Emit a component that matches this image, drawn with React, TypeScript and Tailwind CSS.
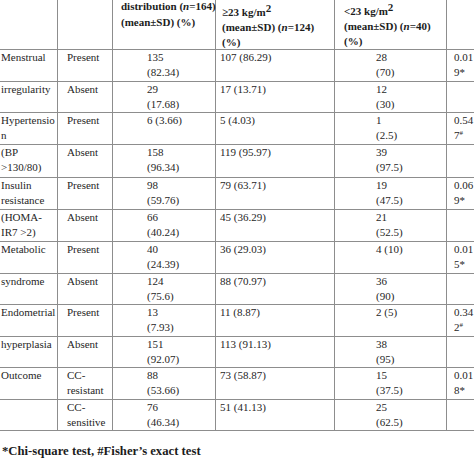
type Row = {
  label: string[]
  group: string[]
  total: string[]
  high: string
  low: string[]
  p?: [string, string]
  fisher?: boolean
  h: string
}

const rows: Row[] = [
  { h: 'h-[32px]', label: ['Menstrual'], group: ['Present'], total: ['135', '(82.34)'], high: '107 (86.29)', low: ['28', '(70)'], p: ['0.01', '9*'] },
  { h: 'h-[31px]', label: ['irregularity'], group: ['Absent'], total: ['29', '(17.68)'], high: '17 (13.71)', low: ['12', '(30)'] },
  { h: 'h-[32px]', label: ['Hypertensio', 'n'], group: ['Present'], total: ['6 (3.66)'], high: '5 (4.03)', low: ['1', '(2.5)'], p: ['0.54', '7'], fisher: true },
  { h: 'h-[33px]', label: ['(BP', '>130/80)'], group: ['Absent'], total: ['158', '(96.34)'], high: '119 (95.97)', low: ['39', '(97.5)'] },
  { h: 'h-[32px]', label: ['Insulin', 'resistance'], group: ['Present'], total: ['98', '(59.76)'], high: '79 (63.71)', low: ['19', '(47.5)'], p: ['0.06', '9*'] },
  { h: 'h-[32px]', label: ['(HOMA-', 'IR7 >2)'], group: ['Absent'], total: ['66', '(40.24)'], high: '45 (36.29)', low: ['21', '(52.5)'] },
  { h: 'h-[32px]', label: ['Metabolic'], group: ['Present'], total: ['40', '(24.39)'], high: '36 (29.03)', low: ['4 (10)'], p: ['0.01', '5*'] },
  { h: 'h-[31px]', label: ['syndrome'], group: ['Absent'], total: ['124', '(75.6)'], high: '88 (70.97)', low: ['36', '(90)'] },
  { h: 'h-[32px]', label: ['Endometrial'], group: ['Present'], total: ['13', '(7.93)'], high: '11 (8.87)', low: ['2 (5)'], p: ['0.34', '2'], fisher: true },
  { h: 'h-[31px]', label: ['hyperplasia'], group: ['Absent'], total: ['151', '(92.07)'], high: '113 (91.13)', low: ['38', '(95)'] },
  { h: 'h-[32px]', label: ['Outcome'], group: ['CC-', 'resistant'], total: ['88', '(53.66)'], high: '73 (58.87)', low: ['15', '(37.5)'], p: ['0.01', '8*'] },
  { h: 'h-[31px]', label: [], group: ['CC-', 'sensitive'], total: ['76', '(46.34)'], high: '51 (41.13)', low: ['25', '(62.5)'] },
]

// the -mb keeps the two text lines from stretching the row past its set height
function Lines({ items }: { items: string[] }) {
  return (
    <div className="-mb-[4px]">
      {items.map((t, i) => (
        <div key={i}>{t}</div>
      ))}
    </div>
  )
}

function Sq() {
  return <span className="relative -top-[4px] text-[11px] leading-none">2</span>
}

const cell = 'border border-[#8d8d8d] align-top p-0 whitespace-nowrap'

export default function App() {
  return (
    <div
      className="w-[474px] h-[474px] overflow-hidden bg-white text-[#262626]"
      style={{ fontFamily: '"Liberation Serif", "Times New Roman", serif' }}
    >
      <table className="-ml-[6px] w-[512px] table-fixed border-collapse text-[11px] leading-[15.4px]">
        <colgroup>
          <col className="w-[63px]" />
          <col className="w-[55px]" />
          <col className="w-[103px]" />
          <col className="w-[119px]" />
          <col className="w-[112px]" />
          <col className="w-[60px]" />
        </colgroup>
        <thead className="font-bold text-[#1c1c1c]">
          <tr className="h-[49px]">
            <th className={`${cell} border-t-0`} />
            <th className={`${cell} border-t-0`} />
            <th className={`${cell} border-t-0 text-left font-bold pl-[8px]`}>
              <div className="-mt-[2px] leading-[16px]">
                <div>
                  distribution (<i>n</i>=164)
                </div>
                <div>(mean±SD) (%)</div>
              </div>
            </th>
            <th className={`${cell} border-t-0 text-left font-bold pl-[6px]`}>
              <div className="pt-[5px] -mb-[6px] leading-[15px]">
                <div>
                  ≥23 kg/m<Sq />
                </div>
                <div>
                  (mean±SD) (<i>n</i>=124)
                </div>
                <div>(%)</div>
              </div>
            </th>
            <th className={`${cell} border-t-0 text-left font-bold pl-[9px]`}>
              <div className="pt-[4px] -mb-[6px] leading-[15px]">
                <div>
                  &lt;23 kg/m<Sq />
                </div>
                <div>
                  (mean±SD) (<i>n</i>=40)
                </div>
                <div>(%)</div>
              </div>
            </th>
            <th className={`${cell} border-t-0`} />
          </tr>
        </thead>
        <tbody>
          {rows.map((r, i) => (
            <tr key={i} className={r.h}>
              <td className={`${cell} pl-[6px]`}>
                <Lines items={r.label} />
              </td>
              <td className={`${cell} pl-[9px]`}>
                <Lines items={r.group} />
              </td>
              <td className={`${cell} pl-[34px]`}>
                <Lines items={r.total} />
              </td>
              <td className={`${cell} pl-[4px]`}>
                <Lines items={[r.high]} />
              </td>
              <td className={`${cell} pl-[41px]`}>
                <Lines items={r.low} />
              </td>
              <td className={`${cell} pl-[7px]`}>
                {r.p && (
                  <div className="-mb-[4px]">
                    <div>{r.p[0]}</div>
                    <div>
                      {r.p[1]}
                      {r.fisher && <span className="relative -top-[4px] text-[7px] leading-none">#</span>}
                    </div>
                  </div>
                )}
              </td>
            </tr>
          ))}
        </tbody>
      </table>
      <p className="mt-[12px] pl-[2px] text-[12.7px] font-bold leading-[16px] text-[#1c1c1c]">
        *Chi-square test, #Fisher’s exact test
      </p>
    </div>
  )
}
